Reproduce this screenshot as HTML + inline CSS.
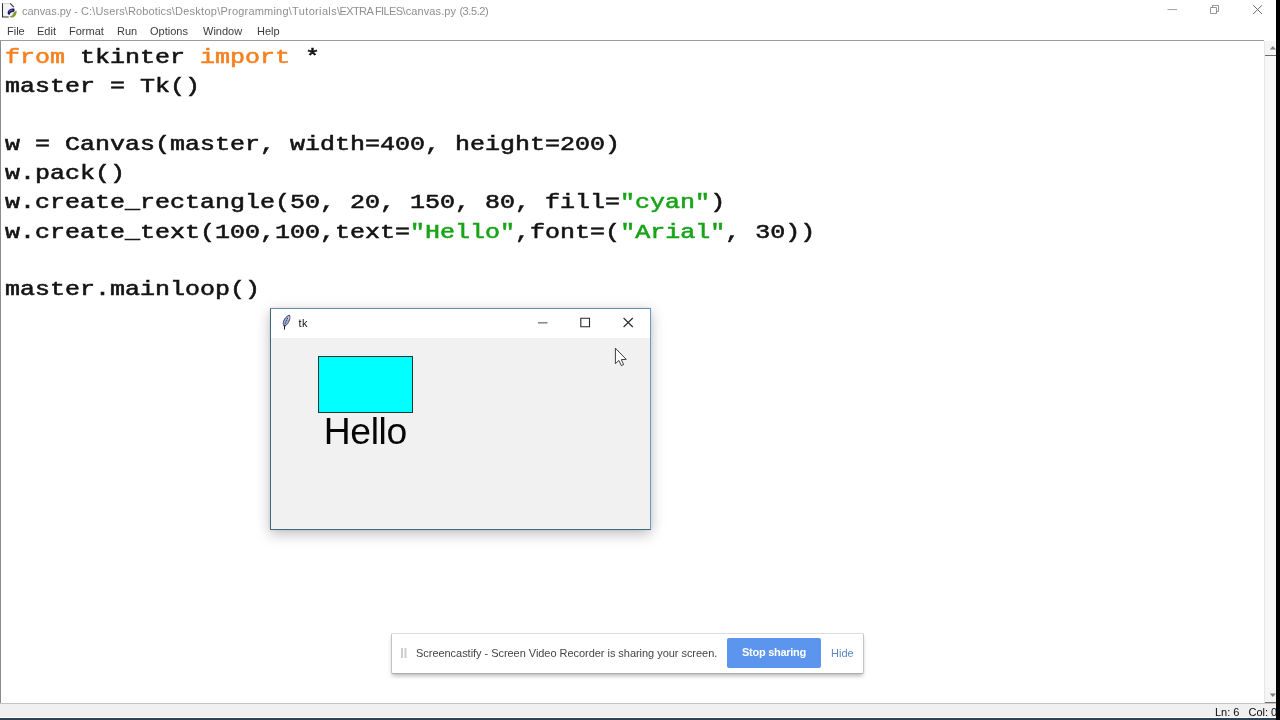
<!DOCTYPE html>
<html>
<head>
<meta charset="utf-8">
<title>canvas.py</title>
<style>
html,body{margin:0;padding:0;}
body{will-change:transform;width:1280px;height:720px;overflow:hidden;position:relative;background:#fff;font-family:"Liberation Sans",sans-serif;}
.abs{position:absolute;}
svg{position:absolute;overflow:visible;}
#title{left:22px;top:4px;font-size:11px;line-height:14px;color:#8f8f8f;white-space:nowrap;}
#menu{left:0;top:24px;height:14px;font-size:11px;line-height:14px;color:#3c3c3c;white-space:nowrap;}
#menu span,#title span{position:absolute;top:0;white-space:pre;}
#sep{left:0;top:40px;width:1264px;height:1px;background:#9c9c9c;}
#leftb{left:0;top:41px;width:1px;height:662px;background:#8c8c8c;}
#code{left:5px;top:43.8px;margin:0;font-family:"Liberation Mono",monospace;font-weight:normal;font-size:25px;line-height:36.25px;color:#141414;white-space:pre;transform:scaleY(0.8);transform-origin:0 0;-webkit-text-stroke:0.7px currentColor;}
.k{color:#f4801f;}
.s{color:#18a418;}
#sbar{left:1264px;top:41px;width:12px;height:662px;background:#f7f7f7;border-left:1px solid #e6e6e6;box-sizing:border-box;}
#sbup{left:1265px;top:41px;width:11px;height:14px;background:#f4f4f4;border-bottom:1px solid #6e6e6e;}
#sbdn{left:1265px;top:688px;width:11px;height:14px;background:#f4f4f4;border-bottom:1px solid #6e6e6e;}
#status{left:0;top:703px;width:1276px;height:14px;background:#f0f0f0;border-top:1px solid #c4c4c4;box-sizing:border-box;}
#bottomdark{left:0;top:718px;width:1280px;height:2px;background:#2e4255;}
#blackbar{left:1275.5px;top:0;width:5px;height:720px;background:#000;}
#stat1{left:1215px;top:705px;font-size:11px;line-height:14px;color:#0c0c0c;white-space:nowrap;}
#stat2{left:1248.5px;top:705px;font-size:11px;line-height:14px;color:#0c0c0c;white-space:nowrap;}
/* tk window */
#tk{left:270px;top:308px;width:381px;height:222px;box-sizing:border-box;border:1px solid #3e6985;border-top-color:#6a8daa;border-right-color:#6f9ac2;background:#f1f1f1;box-shadow:0 4px 13px rgba(0,0,0,0.26),0 0 3px rgba(0,0,0,0.10);}
#tkbar{left:0;top:0;width:379px;height:29px;background:#fff;}
#tktitle{left:27.6px;top:7px;letter-spacing:0.3px;font-size:11px;line-height:14px;color:#111;}
#rect{left:47.2px;top:47.2px;width:94.4px;height:56.8px;box-sizing:border-box;border:1px solid #1a3a3a;background:#00ffff;}
#hello{left:52.8px;top:100px;white-space:nowrap;letter-spacing:-0.38px;font-size:37.3px;line-height:44px;color:#050505;}
/* share bar */
#share{left:391px;top:633px;width:473px;height:41px;box-sizing:border-box;border:1px solid #c4c4c4;border-top-color:#dddddd;border-bottom-color:#adadad;border-radius:2px;background:#fff;box-shadow:0 3px 4px -1px rgba(0,0,0,0.28);}
#grip{left:9px;top:14px;width:1.5px;height:10px;background:#cdcdcd;box-shadow:3.5px 0 0 #cdcdcd;}
#sharetxt{left:24px;top:12px;letter-spacing:-0.04px;font-size:11px;line-height:14px;color:#444;white-space:nowrap;}
#stop{left:335px;top:4.4px;width:94px;height:29.5px;background:#5b95ee;border-radius:2px;color:#fff;font-size:11px;font-weight:bold;line-height:29px;text-align:center;letter-spacing:-0.26px;}
#hide{left:439px;top:12px;font-size:11px;line-height:14px;color:#5a86c8;}
</style>
</head>
<body>
<div class="abs" id="title"><span style="left:0.0px;letter-spacing:-0.03px">canvas.py - </span><span style="left:59.0px;letter-spacing:0.13px">C:\Users\</span><span style="left:106.0px;letter-spacing:0.13px">Robotics\</span><span style="left:153.0px;letter-spacing:0.26px">Desktop\</span><span style="left:198.5px;letter-spacing:0.20px">Programming</span><span style="left:266.7px;letter-spacing:0.35px">\Tutorials</span><span style="left:315.0px;letter-spacing:-0.6px">\EXTRA FILES</span><span style="left:380.5px;letter-spacing:0.11px">\canvas.py </span><span style="left:437.4px;letter-spacing:-0.43px">(3.5.2)</span></div>
<div class="abs" id="menu"><span style="left:7px">File</span><span style="left:37px">Edit</span><span style="left:69px">Format</span><span style="left:117px">Run</span><span style="left:150px">Options</span><span style="left:203px">Window</span><span style="left:257px">Help</span></div>
<div class="abs" id="sep"></div>
<div class="abs" id="leftb"></div>
<pre class="abs" id="code"><span class="k">from</span> tkinter <span class="k">import</span> *
master = Tk()

w = Canvas(master, width=400, height=200)
w.pack()
w.create_rectangle(50, 20, 150, 80, fill=<span class="s">"cyan"</span>)
w.create_text(100,100,text=<span class="s">"Hello"</span>,font=(<span class="s">"Arial"</span>, 30))

master.mainloop()</pre>
<div class="abs" id="sbar"></div>
<div class="abs" id="sbup"></div>
<div class="abs" id="sbdn"></div>
<div class="abs" id="status"></div>
<div class="abs" id="stat1">Ln: 6</div>
<div class="abs" id="stat2">Col: 0</div>
<div class="abs" id="bottomdark"></div>

<!-- main window icons -->
<svg id="icons" width="1280" height="60" style="left:0;top:0" viewBox="0 0 1280 60">
  <!-- IDLE file icon -->
  <path d="M2.5 3.5 L10.5 3.5 L14 7 L14 17 L2.5 17 Z" fill="#f1f3f6" stroke="none"/>
  <path d="M2.5 3.2 L2.5 17 L8.6 17" fill="none" stroke="#2e2e2e" stroke-width="1.05"/>
  <path d="M10.2 3.4 L13.8 7.2" fill="none" stroke="#3a3a3a" stroke-width="1.2"/>
  <path d="M3 3.5 L10 3.5" fill="none" stroke="#c9c9c9" stroke-width="0.8"/>
  <path d="M7.7 13.6 C7.3 10.6 9.8 8.3 14.2 8.6 C15.2 10 14.6 11.8 13.2 12.1 C11.2 12.4 10 13 9.6 14.9 C8.6 14.8 7.9 14.4 7.7 13.6 Z" fill="#1c1a6e"/><path d="M9 11.8 C10 10.6 11.4 10.2 12.6 10.2" fill="none" stroke="#8d8fd6" stroke-width="0.9"/>
  <path d="M9.5 16.5 C12 16 13 14.5 13.5 13 C14.5 11.5 15.5 11 16.5 10.5 C17 13 16 16 13 17.5 C11.5 17.8 10 17.5 9.5 16.5 Z" fill="#8a9a2c"/>
  <!-- min / restore / close -->
  <path d="M1167.5 9.6 H1177" stroke="#a2a2a2" stroke-width="1" fill="none"/>
  <path d="M1210.5 7.5 H1216.5 V13.5 H1210.5 Z M1212.5 7.5 V5.5 H1218.5 V11.5 H1216.5" stroke="#8a8a8a" stroke-width="0.9" stroke-linejoin="miter" fill="none"/>
  <path d="M1253.2 5.2 L1262 14 M1262 5.2 L1253.2 14" stroke="#6a6a6a" stroke-width="1" fill="none"/>
  <!-- scroll up arrow -->
  <path d="M1269.8 49.5 L1272.8 46 L1276 49.5 Z" fill="#7e7e7e"/>
</svg>
<svg width="20" height="20" style="left:1262px;top:686px" viewBox="1262 686 20 20">
  <path d="M1269.8 693.5 L1276 693.5 L1272.8 697 Z" fill="#7e7e7e"/>
</svg>

<div class="abs" id="tk">
  <div class="abs" id="tkbar"></div>
  <svg width="379" height="60" style="left:0;top:0" viewBox="271 309 379 60">
    <!-- feather -->
    <path d="M284.5 326.8 C283.6 325.6 282.9 324 283.3 322.2 C283.9 319.4 286.4 315.9 289.5 315.1 C290.5 317.4 289.7 320.8 287.8 323.4 C286.8 324.8 285.5 326 284.5 326.8 Z" fill="#9dabd9" stroke="#2b2e4a" stroke-width="0.8"/>
    <path d="M288.9 315.9 C289.6 317 289.4 318.6 288.6 319.8 C288.2 318.4 288.2 317 288.9 315.9 Z" fill="#eef0f8"/>
    <path d="M284.6 326 C285.2 322.6 286.6 319.6 288.4 317" fill="none" stroke="#14163a" stroke-width="1" stroke-dasharray="1.1 1.3"/>
    <path d="M284.5 326.2 V329.6" fill="none" stroke="#16161e" stroke-width="1"/>
    <!-- controls -->
    <path d="M538 322.8 H547.5" stroke="#7c7c7c" stroke-width="1.4" fill="none"/>
    <path d="M580.8 318.3 H589.5 V326.7 H580.8 Z" stroke="#2a2a2a" stroke-width="1.1" fill="none"/>
    <path d="M623.6 318 L632.8 327 M632.8 318 L623.6 327" stroke="#2a2a2a" stroke-width="1.1" fill="none"/>
    <!-- cursor -->
    <path d="M615.4 348.2 L615.4 363.6 L618.9 360.4 L621.3 365.6 L623.6 364.6 L621.3 359.6 L626.2 359.4 Z" fill="#fff" stroke="#1e1e1e" stroke-width="0.85" stroke-linejoin="miter"/>
  </svg>
  <div class="abs" id="tktitle">tk</div>
  <div class="abs" id="rect"></div>
  <div class="abs" id="hello">Hello</div>
</div>

<div class="abs" id="share">
  <div class="abs" id="grip"></div>
  <div class="abs" id="sharetxt">Screencastify - Screen Video Recorder is sharing your screen.</div>
  <div class="abs" id="stop">Stop sharing</div>
  <div class="abs" id="hide">Hide</div>
</div>
<div class="abs" id="blackbar"></div>
</body>
</html>
